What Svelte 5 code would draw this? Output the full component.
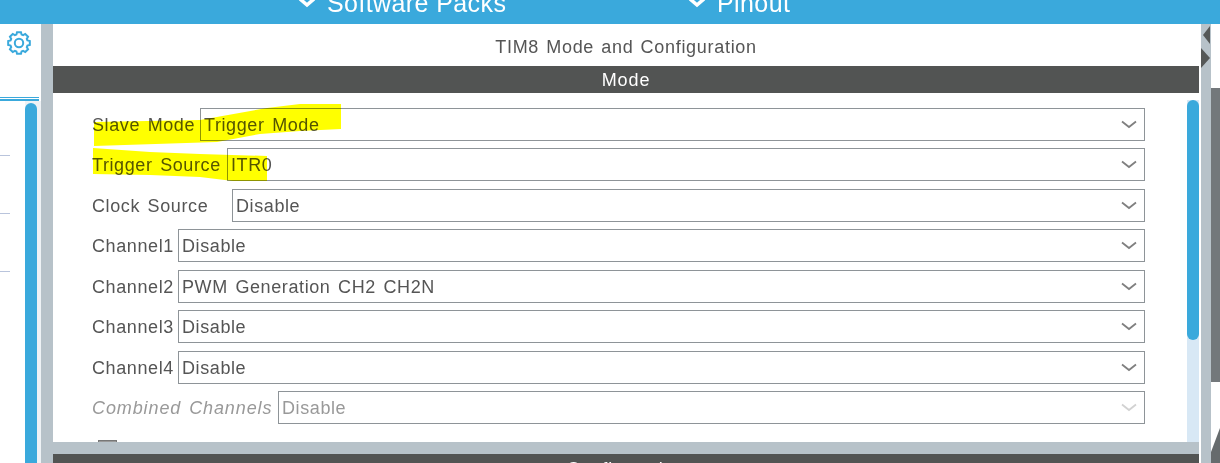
<script lang="ts">
  type Row = { label: string; value: string; labelWidth: number; disabled?: boolean };

  const rows: Row[] = [
    { label: 'Slave Mode', value: 'Trigger Mode', labelWidth: 108 },
    { label: 'Trigger Source', value: 'ITR0', labelWidth: 135 },
    { label: 'Clock Source', value: 'Disable', labelWidth: 140 },
    { label: 'Channel1', value: 'Disable', labelWidth: 86 },
    { label: 'Channel2', value: 'PWM Generation CH2 CH2N', labelWidth: 86 },
    { label: 'Channel3', value: 'Disable', labelWidth: 86 },
    { label: 'Channel4', value: 'Disable', labelWidth: 86 },
    { label: 'Combined Channels', value: 'Disable', labelWidth: 186, disabled: true }
  ];

  // eight toothed outline, centred on 12,12
  const gearPath = Array.from({ length: 8 }, (_, i) => {
    const a = (i * Math.PI) / 4;
    const pt = (r: number, off: number) =>
      `${(12 + r * Math.cos(a + off)).toFixed(2)} ${(12 + r * Math.sin(a + off)).toFixed(2)}`;
    return `${i ? 'L' : 'M'}${pt(8.8, -0.3)} L${pt(11, -0.18)} L${pt(11, 0.18)} L${pt(8.8, 0.3)}`;
  }).join(' ') + ' Z';
</script>

<div class="app">
  <header class="topbar">
    <div class="tab tab--packs">
      <svg class="tab-chevron" viewBox="0 0 18 12"><path d="M2 2 L9 8 L16 2" /></svg>
      <span>Software Packs</span>
    </div>
    <div class="tab tab--pinout">
      <svg class="tab-chevron" viewBox="0 0 18 12"><path d="M2 2 L9 8 L16 2" /></svg>
      <span>Pinout</span>
    </div>
  </header>

  <div class="workspace">
    <aside class="sidebar">
      <div class="gear-slot">
        <svg class="gear" viewBox="0 0 24 24">
          <path d={gearPath} />
          <circle cx="12" cy="12" r="4.2" />
        </svg>
      </div>
      <div class="rule-pair"></div>
      <div class="side-body">
        <div class="ticks">
          <span></span>
          <span></span>
          <span></span>
        </div>
        <div class="side-scroll"><div class="side-thumb"></div></div>
      </div>
    </aside>

    <div class="splitter"></div>

    <main class="panel">
      <h1 class="panel-title">TIM8 Mode and Configuration</h1>
      <h2 class="band">Mode</h2>
      <div class="mode-body">
        <div class="form">
          {#each rows as row (row.label)}
            <div class="row" class:row--off={row.disabled}>
              <span class="row-label" style:width="{row.labelWidth}px">{row.label}</span>
              <div class="select">
                <span class="select-value">{row.value}</span>
                <svg class="select-chevron" viewBox="0 0 16 9"><path d="M1 1.5 L8 7 L15 1.5" /></svg>
              </div>
            </div>
          {/each}
          <div class="checkbox"></div>
        </div>
        <div class="scroll"><div class="scroll-thumb"></div></div>
      </div>
      <div class="divider"></div>
      <h2 class="band band--config">Configuration</h2>
    </main>

    <div class="splitter splitter--right">
      <svg class="arrows" viewBox="0 0 10 42">
        <path d="M9 0 L9 18 L2 9 Z" />
        <path d="M0 22 L0 42 L9 32 Z" />
      </svg>
    </div>

    <aside class="edge">
      <div class="edge-block"></div>
      <svg class="edge-corner" viewBox="0 0 9 35"><path d="M9 0 L9 35 L0 35 L0 24 Z" /></svg>
    </aside>
  </div>

  <svg class="marker" viewBox="0 0 1220 463">
    <path d="M94 122 L200 120 L267 108 L300 104 L341 104 L341 129 L300 131 L260 134 L217 142 L94 146 Z" />
    <path d="M93 148 L150 152 L200 154 L267 156 L267 181 L233 181 L200 177 L150 175 L93 174 Z" />
  </svg>
</div>

<style>
  :global(body) {
    margin: 0;
    background: #fff;
  }

  .app {
    position: relative;
    display: flex;
    flex-direction: column;
    width: 1220px;
    height: 463px;
    overflow: hidden;
    font-family: 'Liberation Sans', Arial, sans-serif;
    color: #555;
  }

  .topbar {
    position: relative;
    flex: 0 0 24px;
    background: #3aa9dc;
    color: #fff;
    overflow: hidden;
  }

  .tab {
    position: absolute;
    bottom: 8px;
    display: flex;
    align-items: flex-end;
    gap: 11px;
    font-size: 25px;
    line-height: 26px;
    letter-spacing: 0.4px;
  }

  .tab--packs {
    left: 298px;
  }

  .tab--pinout {
    left: 688px;
  }

  .tab-chevron {
    width: 18px;
    height: 12px;
    margin-bottom: 7px;
  }

  .tab-chevron path {
    fill: none;
    stroke: #fff;
    stroke-width: 3.6;
  }

  .workspace {
    flex: 1;
    display: flex;
    min-height: 0;
  }

  .sidebar {
    flex: 0 0 41px;
    display: flex;
    flex-direction: column;
    min-height: 0;
  }

  .gear-slot {
    height: 73px;
    display: flex;
    padding: 7px 0 0 7px;
    box-sizing: border-box;
  }

  .gear {
    width: 24px;
    height: 24px;
  }

  .gear path,
  .gear circle {
    fill: none;
    stroke: #3aa9dc;
    stroke-width: 2;
  }

  .rule-pair {
    width: 39px;
    height: 4px;
    box-sizing: border-box;
    border-top: 1px solid #3aa9dc;
    border-bottom: 2px solid #3aa9dc;
    flex: none;
  }

  .side-body {
    flex: 1;
    position: relative;
    display: flex;
    justify-content: flex-end;
    min-height: 0;
  }

  .ticks {
    position: absolute;
    left: 0;
    top: 54px;
    display: flex;
    flex-direction: column;
    gap: 57px;
  }

  .ticks span {
    display: block;
    width: 10px;
    height: 1px;
    background: #b9c4dc;
  }

  .side-scroll {
    width: 16px;
    background: #eef2f5;
    padding-top: 2px;
    box-sizing: border-box;
  }

  .side-thumb {
    width: 12px;
    height: 100%;
    background: #3aa9dc;
    border-radius: 6px 6px 0 0;
  }

  .splitter {
    flex: 0 0 12px;
    background: #b7c2c9;
  }

  .splitter--right {
    flex: 0 0 10px;
    margin-left: 2px;
    position: relative;
  }

  .arrows {
    position: absolute;
    top: 2px;
    left: 0;
    width: 10px;
    height: 42px;
  }

  .arrows path {
    fill: #555857;
  }

  .panel {
    flex: 0 0 1146px;
    display: flex;
    flex-direction: column;
    min-height: 0;
  }

  .panel-title {
    margin: 0;
    flex: 0 0 42px;
    min-height: 0;
    font-size: 18px;
    font-weight: 400;
    line-height: 46px;
    letter-spacing: 0.7px;
    word-spacing: 1.5px;
    text-align: center;
  }

  .band {
    margin: 0;
    flex: 0 0 27px;
    min-height: 0;
    background: #525453;
    color: #fff;
    font-size: 18px;
    font-weight: 400;
    line-height: 28px;
    letter-spacing: 0.9px;
    text-align: center;
  }

  .band--config {
    line-height: 30px;
  }

  .mode-body {
    flex: 0 0 349px;
    display: flex;
    min-height: 0;
    overflow: hidden;
  }

  .form {
    flex: 1;
    display: flex;
    flex-direction: column;
    gap: 7.45px;
    padding: 15px 42px 0 39px;
    min-width: 0;
  }

  .row {
    display: flex;
    align-items: center;
    flex: 0 0 33px;
    font-size: 18px;
    letter-spacing: 0.6px;
    word-spacing: 2px;
  }

  .row-label {
    flex: none;
    white-space: nowrap;
    padding-top: 2px;
  }

  .row--off .row-label {
    color: #999;
    font-style: italic;
    letter-spacing: 0.9px;
  }

  .select {
    flex: 1;
    height: 33px;
    box-sizing: border-box;
    border: 1px solid #8e9498;
    display: flex;
    align-items: center;
    justify-content: space-between;
    padding: 0 7px 0 3px;
    white-space: nowrap;
  }

  .select-value {
    padding-top: 2px;
  }

  .row--off .select {
    color: #999;
  }

  .select-chevron {
    width: 16px;
    height: 9px;
  }

  .select-chevron path {
    fill: none;
    stroke: #808080;
    stroke-width: 1.8;
  }

  .row--off .select-chevron path {
    stroke: #d2d2d2;
  }

  .checkbox {
    flex: none;
    width: 19px;
    height: 18px;
    margin: 8px 0 0 6px;
    box-sizing: border-box;
    border: 1px solid #777;
    box-shadow: inset 0 1px 0 #999;
  }

  .scroll {
    flex: 0 0 12px;
    margin-top: 7px;
    background: #d8e8f5;
  }

  .scroll-thumb {
    height: 240px;
    background: #3aa9dc;
    border-radius: 6px;
  }

  .divider {
    flex: 0 0 12px;
    background: #b7c2c9;
  }

  .edge {
    flex: 1;
    position: relative;
    display: flex;
    flex-direction: column;
  }

  .edge-block {
    width: 9px;
    height: 294px;
    margin-top: 64px;
    background: #73787b;
  }

  .edge-corner {
    position: absolute;
    left: 0;
    bottom: 0;
    width: 9px;
    height: 35px;
  }

  .edge-corner path {
    fill: #666b6d;
  }

  .marker {
    position: absolute;
    inset: 0;
    width: 1220px;
    height: 463px;
    mix-blend-mode: multiply;
    pointer-events: none;
  }

  .marker path {
    fill: #ffff00;
  }
</style>
